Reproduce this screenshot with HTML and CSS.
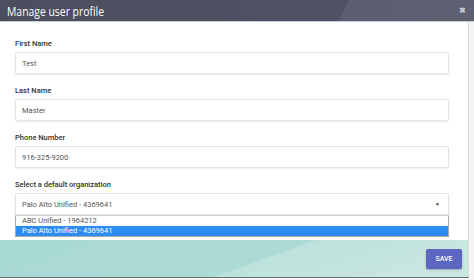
FILE: index.html
```html
<!DOCTYPE html>
<html lang="en">
<head>
    <meta charset="UTF-8">
    <meta name="viewport" content="width=device-width, initial-scale=1.0">
    <title>Manage user profile</title>
    <link rel="stylesheet" href="styles.css">
</head>
<body>
    <div class="modal">
        <div class="modal-header">
            <h1>Manage user profile</h1>
            <span class="close">&#x2716;</span>
        </div>

        <div class="modal-body">
            <div class="form-group">
                <label>First Name</label>
                <div class="field">Test</div>
            </div>
            <div class="form-group">
                <label>Last Name</label>
                <div class="field">Master</div>
            </div>
            <div class="form-group">
                <label>Phone Number</label>
                <div class="field">916-325-9200</div>
            </div>
            <div class="form-group select-group">
                <label>Select a default organization</label>
                <div class="field select">
                    <span>Palo Alto Unified - 4369641</span>
                    <span class="arrow">&#x25BC;</span>
                </div>
                <ul class="options">
                    <li>ABC Unified - 1964212</li>
                    <li class="active">Palo Alto Unified - 4369641</li>
                </ul>
            </div>
        </div>

        <div class="modal-footer">
            <button class="btn">SAVE</button>
        </div>
    </div>
</body>
</html>
```

FILE: styles.css
```css
* {
    margin: 0;
    padding: 0;
    box-sizing: border-box;
}

body {
    font-family: Roboto, "Liberation Sans", sans-serif;
    background: #f4f4f4;
    width: 474px;
    height: 280px;
    overflow: hidden;
}

.modal {
    width: 469px;
    height: 278px;
    background: white;
    border-right: 1px solid #dcdcdc;
    border-bottom: 1px solid #6d7272;
    display: flex;
    flex-direction: column;
}

.modal-header {
    height: 22px;
    width: 474px;
    background: linear-gradient(115deg, #4a4e5e 0%, #4e5264 72%, #5a5e70 72.2%, #5d6172 100%);
    display: flex;
    align-items: center;
    justify-content: space-between;
    padding: 0 8px 0 7px;
    border-bottom: 1px solid #c9cbd0;
}

/* the title font in the shot is a narrow one */
.modal-header h1 {
    font-family: "Open Sans", sans-serif;
    font-weight: 400;
    font-size: 13px;
    color: white;
    transform: scaleX(0.8);
    transform-origin: left center;
}

.close {
    color: #c8cad2;
    font-size: 8px;
    font-weight: bold;
}

.modal-body {
    flex: 1;
    padding: 17px 19px 0 15px;
    position: relative;
}

.form-group {
    margin-bottom: 12px;
}

label {
    display: block;
    font-size: 7.5px;
    font-weight: 500;
    color: #333;
    line-height: 10px;
    margin-bottom: 3px;
}

.field {
    height: 22px;
    border: 1px solid #e3e3e3;
    border-radius: 2px;
    box-shadow: 0 1px 2px rgba(0, 0, 0, 0.08);
    padding: 0 6px;
    font-size: 7.5px;
    color: #555;
    display: flex;
    align-items: center;
}

.select {
    justify-content: space-between;
    border-bottom-left-radius: 0;
    border-bottom-right-radius: 0;
}

.arrow {
    font-size: 5px;
    color: #444;
    margin-right: 2px;
}

.select-group {
    position: relative;
}

.options {
    list-style: none;
    position: absolute;
    left: 0;
    right: 0;
    top: 35px;
    border: 1px solid #a8a8a8;
    border-top-color: #cfcfcf;
    background: white;
    z-index: 2;
}

.options li {
    font-size: 7.5px;
    line-height: 10px;
    padding: 0 6px;
    color: #555;
}

.options li.active {
    background: #2c8cf4;
    color: white;
}

.modal-footer {
    height: 37px;
    background: linear-gradient(160deg, #a9d9d5 0%, #acdbd6 55%, #bde2dc 56%, #cbe8e2 100%);
    display: flex;
    justify-content: flex-end;
    align-items: flex-start;
    padding: 9px 6px 0 0;
}

.btn {
    background: #5c66c0;
    color: white;
    border: none;
    border-radius: 2px;
    width: 36px;
    height: 20px;
    font-family: Roboto, sans-serif;
    font-size: 7px;
    font-weight: 500;
    box-shadow: 0 1px 2px rgba(0, 0, 0, 0.25);
}
```
